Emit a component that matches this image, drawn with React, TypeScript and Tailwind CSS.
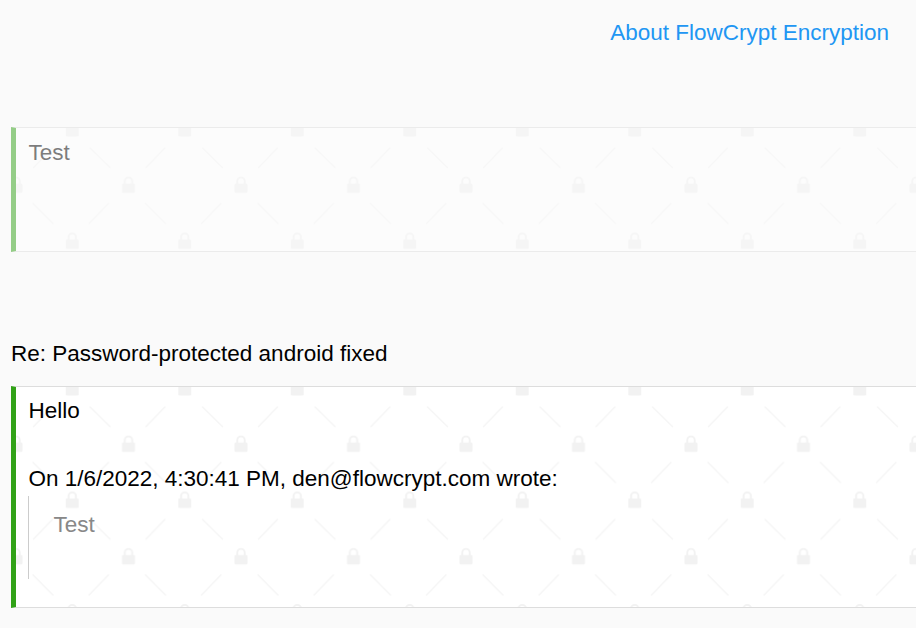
function Lock({ x, y }: { x: number; y: number }) {
  return (
    <g transform={`translate(${x} ${y})`}>
      <path d="M-3.7 -0.5 V-3.4 a3.7 3.7 0 0 1 7.4 0 V-0.5" fill="none" stroke="#f2f2f2" strokeWidth="1.9" />
      <rect x="-6.5" y="-1" width="13" height="9.5" rx="1.2" fill="#f2f2f2" />
    </g>
  );
}

function Watermark({ id }: { id: string }) {
  return (
    <svg className="absolute inset-0 h-full w-full" aria-hidden="true">
      <defs>
        <pattern id={id} width="112.5" height="112.5" patternUnits="userSpaceOnUse">
          <Lock x={56.25} y={0} />
          <Lock x={56.25} y={112.5} />
          <Lock x={0} y={56.5} />
          <Lock x={112.5} y={56.5} />
          <g stroke="#f5f5f5" strokeWidth="1.4" strokeLinecap="round" fill="none">
            <path d="M74 20 L94 39.5" />
            <path d="M36.5 20 L17.5 39.5" />
            <path d="M17 75.5 L37 95.5" />
            <path d="M92.5 75.5 L73 95.5" />
          </g>
        </pattern>
      </defs>
      <rect width="100%" height="100%" fill={`url(#${id})`} />
    </svg>
  );
}

export default function App() {
  return (
    <div className="h-[628px] w-[916px] overflow-hidden bg-[#fafafa] font-['Liberation_Sans',Arial,sans-serif] text-[22.5px] leading-[34px] text-black">
      <div className="flex h-[127px] justify-end pr-[27px] pt-[16px]">
        <a className="text-[#2196f3]">About FlowCrypt Encryption</a>
      </div>

      <div className="relative ml-[11px] h-[125px] overflow-hidden border-y border-l-[5px] border-y-[#dddddd] border-l-[#31a217] bg-white opacity-50">
        <Watermark id="wm1" />
        <div className="relative pl-[12.4px] pt-[8px]">Test</div>
      </div>

      <div className="pl-[11px] pt-[85px]">Re: Password-protected android fixed</div>

      <div className="relative ml-[11px] mt-[15px] h-[222px] overflow-hidden border-y border-l-[5px] border-y-[#dddddd] border-l-[#31a217] bg-white">
        <Watermark id="wm2" />
        <div className="relative pl-[12.4px] pt-[7px]">
          <div>Hello</div>
          <div className="h-[34px]" />
          <div>On 1/6/2022, 4:30:41 PM, den@flowcrypt.com wrote:</div>
          <div className="h-[83px] border-l border-l-[#cccccc] pl-6 pt-3 text-[#888888]">Test</div>
        </div>
      </div>
    </div>
  );
}
